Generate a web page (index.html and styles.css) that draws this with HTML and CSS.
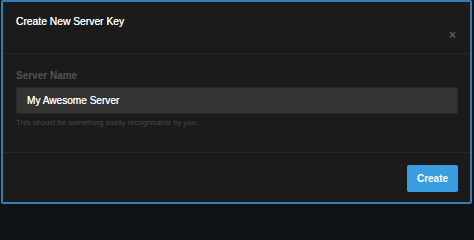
FILE: index.html
```html
<!DOCTYPE html>
<html>
<head>
<meta charset="utf-8">
<link rel="stylesheet" href="styles.css">
</head>
<body>
<div class="modal">
  <div class="modal-header">
    <div class="modal-title">Create New Server Key</div>
    <div class="modal-close">×</div>
  </div>
  <div class="modal-body">
    <div class="field-label">Server Name</div>
    <div class="field-input">My Awesome Server</div>
    <div class="field-help">This should be something easily recognisable by you.</div>
  </div>
  <div class="modal-footer">
    <div class="btn-primary">Create</div>
  </div>
</div>
</body>
</html>
```
FILE: styles.css
```css
html, body {
  margin: 0;
  padding: 0;
  background: #0e1318;
  font-family: "Liberation Sans", Arial, sans-serif;
}
.modal {
  box-sizing: border-box;
  width: 471px;
  height: 204px;
  margin-left: 1px;
  border: 2px solid #3a7bb0;
  border-radius: 2px;
  background: #1b1b1b;
  display: flex;
  flex-direction: column;
}
.modal-header {
  height: 52px;
  box-sizing: border-box;
  border-bottom: 1px solid #262626;
  display: flex;
  justify-content: space-between;
  padding: 14px 14px 0 13px;
}
.modal-title {
  color: #ffffff;
  font-size: 10.3px;
  line-height: 12px;
  text-shadow: 0 0 0.4px #ffffff;
}
.modal-close {
  color: #5c5c5c;
  font-size: 12px;
  font-weight: bold;
  line-height: 10px;
  margin-top: 14px;
}
.modal-body {
  padding: 16px 12px 0 13px;
  height: 99px;
  box-sizing: border-box;
  border-bottom: 1px solid #262626;
}
.field-label {
  color: #535353;
  font-size: 10px;
  font-weight: bold;
  line-height: 12px;
}
.field-input {
  margin-top: 5px;
  height: 27px;
  box-sizing: border-box;
  background: #333333;
  border: 1px solid #2a2a2a;
  border-radius: 2px;
  color: #ffffff;
  font-size: 10.1px;
  line-height: 25px;
  padding-left: 10px;
  text-shadow: 0 0 0.4px #ffffff;
}
.field-help {
  margin-top: 4px;
  color: #474747;
  font-size: 7.7px;
  line-height: 10px;
}
.modal-footer {
  flex: 1;
  display: flex;
  justify-content: flex-end;
  align-items: flex-start;
  padding: 12px 12px 0 0;
}
.btn-primary {
  width: 51px;
  height: 27px;
  background: #3a9de0;
  border-radius: 2px;
  color: #ffffff;
  font-size: 10px;
  font-weight: bold;
  line-height: 27px;
  text-align: center;
}
```
